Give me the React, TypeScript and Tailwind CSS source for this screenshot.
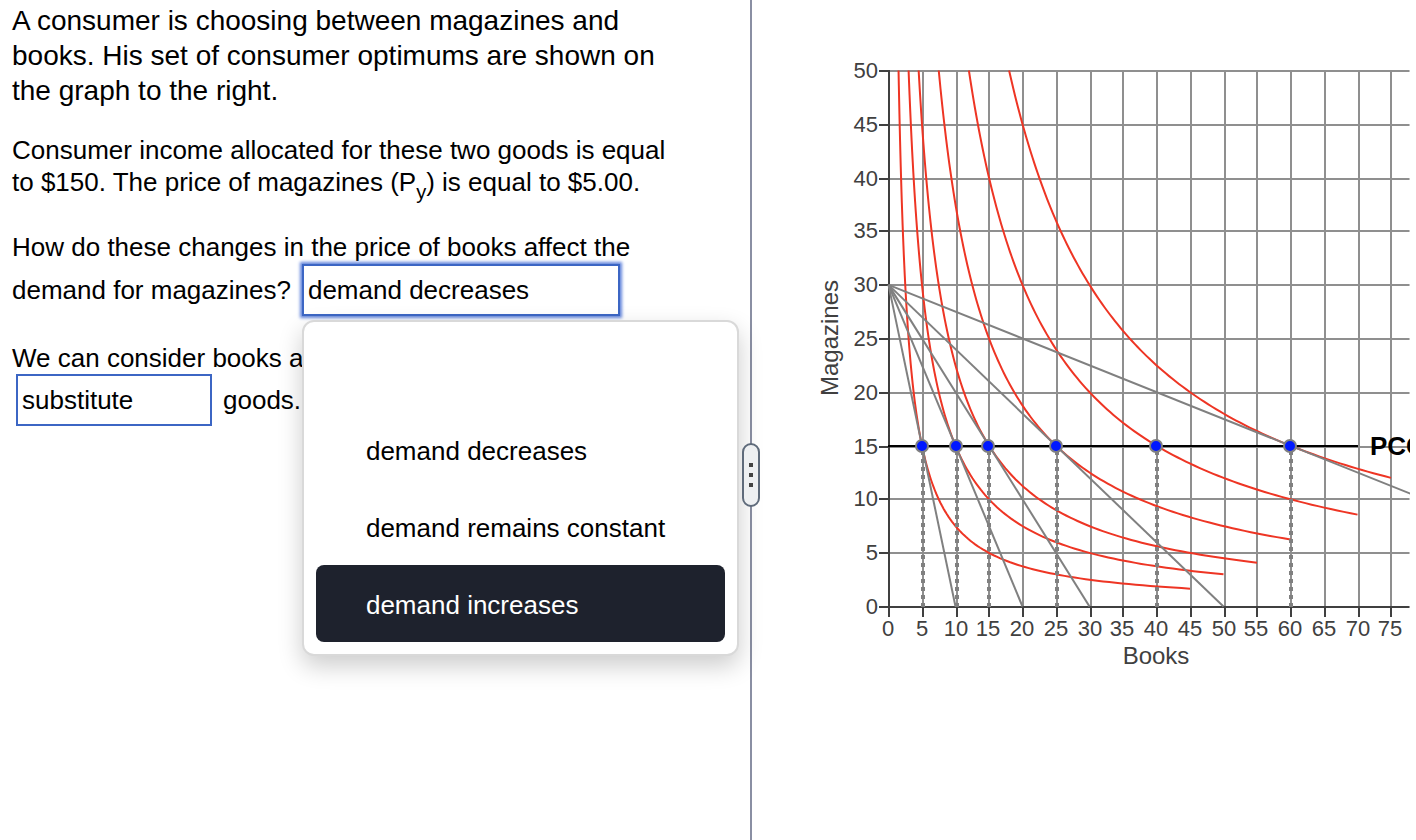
import { useState } from "react";
import { clsx } from "clsx";

const ANSWERS = ["", "demand decreases", "demand remains constant", "demand increases"];

// each curve is x * y = k, drawn up to x = end
const CURVES = [
  { k: 75, end: 45 },
  { k: 150, end: 50 },
  { k: 225, end: 55 },
  { k: 375, end: 60 },
  { k: 600, end: 70 },
  { k: 900, end: 75 },
];

// where each budget line meets the books axis
const BUDGETS = [10, 20, 30, 50, 120];
const OPTIMUMS = [5, 10, 15, 25, 40, 60];
const X_TICKS = Array.from({ length: 16 }, (_, i) => i * 5);
const Y_TICKS = Array.from({ length: 11 }, (_, i) => i * 5);

const px = (v: number) => 136.5 + v * 6.7;
const py = (v: number) => 606.5 - v * 10.72;

const gridX = (v: number) => 137 + 2 * Math.round((v * 6.7) / 2);
const gridY = (v: number) => 607 - 2 * Math.round((v * 10.72) / 2);

function curvePoints(k: number, end: number) {
  const steps = 120;
  const start = k / 50;
  return Array.from({ length: steps + 1 }, (_, i) => {
    const x = start * Math.pow(end / start, i / steps);
    return `${px(x).toFixed(2)},${py(k / x).toFixed(2)}`;
  }).join(" ");
}

function Graph() {
  return (
    <svg
      className="block h-[700px] w-full overflow-hidden font-['Liberation_Sans',Arial,sans-serif]"
      role="img"
      aria-label="Consumer optimums for books and magazines"
    >
      <g stroke="#8f8f8f" strokeWidth={2}>
        {X_TICKS.slice(1).map((v) => (
          <line key={v} x1={gridX(v)} x2={gridX(v)} y1={71} y2={607} />
        ))}
        {Y_TICKS.slice(1).map((v) => (
          <line key={v} x1={137} x2="100%" y1={gridY(v)} y2={gridY(v)} />
        ))}
      </g>

      <g stroke="#404040" strokeWidth={2}>
        <line x1={137} x2={137} y1={70} y2={617} />
        <line x1={127} x2="100%" y1={607} y2={607} />
        {X_TICKS.map((v) => (
          <line key={v} x1={gridX(v)} x2={gridX(v)} y1={607} y2={617} />
        ))}
        {Y_TICKS.map((v) => (
          <line key={v} x1={127} x2={137} y1={gridY(v)} y2={gridY(v)} />
        ))}
      </g>

      <g fill="#404040" fontSize={22}>
        {X_TICKS.map((v) => (
          <text key={v} x={gridX(v) - 1} y={636} textAnchor="middle">
            {v}
          </text>
        ))}
        {Y_TICKS.map((v) => (
          <text key={v} x={126} y={gridY(v) + 7} textAnchor="end">
            {v}
          </text>
        ))}
      </g>
      <g fill="#404040" fontSize={24} textAnchor="middle">
        <text x={404} y={664}>
          Books
        </text>
        <text transform="translate(86 338) rotate(-90)">Magazines</text>
      </g>

      <line x1={136} x2={606} y1={446} y2={446} stroke="#000" strokeWidth={2} />

      <g fill="none" stroke="#ee3524" strokeWidth={2}>
        {CURVES.map((c) => (
          <polyline key={c.k} points={curvePoints(c.k, c.end)} />
        ))}
      </g>
      <g stroke="#808080" strokeWidth={2}>
        {BUDGETS.map((b) => (
          <line key={b} x1={px(0)} y1={py(30)} x2={px(b)} y2={py(0)} />
        ))}
      </g>

      {OPTIMUMS.map((v) => (
        <g key={v} stroke="#808080">
          <line x1={gridX(v)} x2={gridX(v)} y1={451} y2={607} strokeWidth={4} strokeDasharray="4 4" />
          <circle cx={gridX(v) - 1} cy={446} r={6} fill="#0018ff" strokeWidth={2} />
        </g>
      ))}
      <text x={618} y={455} fontSize={26} fontWeight={700}>
        PCC
      </text>
    </svg>
  );
}

export default function App() {
  const [demand, setDemand] = useState("demand decreases");
  const [relation, setRelation] = useState("substitute");
  const [open, setOpen] = useState(true);
  const [active, setActive] = useState(3);

  return (
    <div className="flex min-h-screen overflow-hidden bg-white font-['Liberation_Sans',Arial,sans-serif] text-black">
      <main className="w-[53%] shrink-0 px-3 pt-[3px] text-[26px] leading-8">
        <p className="max-w-[660px] text-[28px] leading-[35px]">
          A consumer is choosing between magazines and books. His set of consumer optimums are shown on the graph to
          the right.
        </p>
        <p className="mt-[26px] max-w-[660px]">
          Consumer income allocated for these two goods is equal to $150. The price of magazines (P
          <sub className="-bottom-2 text-xl leading-none">y</sub>) is equal to $5.00.
        </p>

        <div className="mt-8">
          <p className="leading-[34px]">How do these changes in the price of books affect the</p>
          <div className="flex items-center">
            <label htmlFor="demand">demand for magazines?</label>
            <div className="relative ml-[11px]">
              <select
                id="demand"
                value={demand}
                onChange={(e) => setDemand(e.target.value)}
                className="block h-[52px] w-[318px] appearance-none border-2 border-[#3c66c4] bg-white pl-1 shadow-[0_0_3px_2px_#6486dc] outline-none"
              >
                {ANSWERS.map((a) => (
                  <option key={a}>{a}</option>
                ))}
              </select>
              {open && (
                <ul
                  role="listbox"
                  aria-label="Demand for magazines"
                  className="absolute top-14 left-0 z-10 w-[437px] rounded-xl border-2 border-[#d9d9d9] bg-white p-3 shadow-[0_10px_24px_rgba(0,0,0,0.2)]"
                >
                  {ANSWERS.map((a, i) => (
                    <li key={a} role="option" aria-selected={a === demand}>
                      <button
                        type="button"
                        aria-label={a || "no answer"}
                        onMouseEnter={() => setActive(i)}
                        onClick={() => {
                          setDemand(a);
                          setOpen(false);
                        }}
                        className={clsx(
                          "block h-[77px] w-full rounded-lg pt-[2px] pl-[50px] text-left",
                          i === active && "bg-[#1e222d] text-white"
                        )}
                      >
                        {a}
                      </button>
                    </li>
                  ))}
                </ul>
              )}
            </div>
          </div>
        </div>

        <div className="mt-[26px]">
          <p>We can consider books and magazines</p>
          <div className="flex items-center">
            <select
              aria-label="Type of goods"
              value={relation}
              onChange={(e) => setRelation(e.target.value)}
              className="ml-1 h-[52px] w-[196px] appearance-none border-2 border-[#3c66c4] bg-white pl-1"
            >
              <option>substitute</option>
              <option>complementary</option>
            </select>
            <span className="ml-[11px]">goods.</span>
          </div>
        </div>
      </main>

      <div className="relative w-[2px] shrink-0 bg-[#8a8fa3]">
        <button
          type="button"
          aria-label="Resize panels"
          className="absolute top-[443px] -left-2 z-20 flex h-16 w-[18px] cursor-col-resize flex-col items-center justify-center gap-[6px] rounded-full border-2 border-[#5f6b7b] bg-[#eef0f2]"
        >
          <span className="size-1 bg-[#444]" />
          <span className="size-1 bg-[#444]" />
          <span className="size-1 bg-[#444]" />
        </button>
      </div>

      <section className="mr-[6px] min-w-0 flex-1">
        <Graph />
      </section>
    </div>
  );
}
